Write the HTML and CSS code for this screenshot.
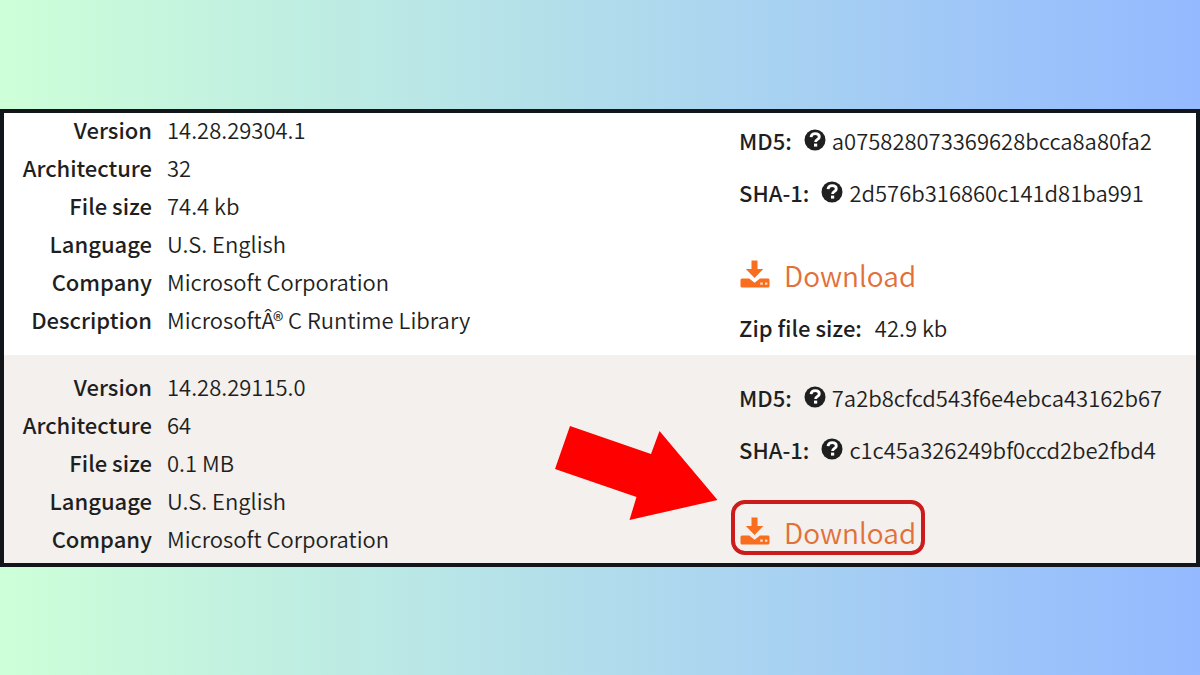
FILE: index.html
```
<!DOCTYPE html>
<html lang="en">
<head>
    <meta charset="UTF-8">
    <meta name="viewport" content="width=device-width, initial-scale=1.0">
    <title>Microsoft C Runtime Library</title>
    <link rel="stylesheet" href="styles.css">
</head>
<body>
    <!-- Shared icons -->
    <svg class="icon-defs" aria-hidden="true">
        <symbol id="icon-help" viewBox="0 0 22 22">
            <circle cx="11" cy="11" r="10.5" fill="#1f1f1f"/>
            <path d="M7 8.200C7.300 5.800 9 4.700 11.200 4.700c2.400 0 4.100 1.200 4.100 3.200 0 2.500-3.700 2.500-3.700 5.100" fill="none" stroke="#fff" stroke-width="2.800"/>
            <rect x="10" y="14.600" width="3.200" height="3" fill="#fff"/>
        </symbol>
        <symbol id="icon-download" viewBox="0 0 30 28">
            <path d="M11.500 0.500h6v8.500h5.800L14.600 18 5.800 9h5.700z" fill="currentColor"/>
            <path d="M2 18.500h7.200l5.400 4.300 5.400-4.300H28a1.500 1.500 0 0 1 1.500 1.500v6a1.500 1.500 0 0 1-1.500 1.500H2A1.500 1.500 0 0 1 .5 26v-6A1.500 1.500 0 0 1 2 18.500z" fill="currentColor"/>
            <path d="M20.200 22.500h2.600v2.200h-2.600zM25 22.500h2.400v2.200H25z" fill="#fff" opacity="0.75"/>
        </symbol>
    </svg>

    <main class="file-list">
        <section class="file-row">
            <dl class="file-info">
                <dt>Version</dt>
                <dd>14.28.29304.1</dd>
                <dt>Architecture</dt>
                <dd>32</dd>
                <dt>File size</dt>
                <dd>74.4 kb</dd>
                <dt>Language</dt>
                <dd>U.S. English</dd>
                <dt>Company</dt>
                <dd>Microsoft Corporation</dd>
                <dt>Description</dt>
                <dd>MicrosoftÂ® C Runtime Library</dd>
            </dl>
            <div class="file-download">
                <div class="hash">
                    <strong>MD5:</strong>
                    <button class="help" type="button" aria-label="About MD5"><svg><use href="#icon-help"/></svg></button>
                    <span>a075828073369628bcca8a80fa2</span>
                </div>
                <div class="hash">
                    <strong>SHA-1:</strong>
                    <button class="help" type="button" aria-label="About SHA-1"><svg><use href="#icon-help"/></svg></button>
                    <span>2d576b316860c141d81ba991</span>
                </div>
                <a href="#" class="download">
                    <svg class="download-icon" aria-hidden="true"><use href="#icon-download"/></svg>
                    Download
                </a>
                <div class="zip-size"><strong>Zip file size:</strong> <span>42.9 kb</span></div>
            </div>
        </section>

        <section class="file-row">
            <dl class="file-info">
                <dt>Version</dt>
                <dd>14.28.29115.0</dd>
                <dt>Architecture</dt>
                <dd>64</dd>
                <dt>File size</dt>
                <dd>0.1 MB</dd>
                <dt>Language</dt>
                <dd>U.S. English</dd>
                <dt>Company</dt>
                <dd>Microsoft Corporation</dd>
            </dl>
            <div class="file-download">
                <div class="hash">
                    <strong>MD5:</strong>
                    <button class="help" type="button" aria-label="About MD5"><svg><use href="#icon-help"/></svg></button>
                    <span>7a2b8cfcd543f6e4ebca43162b67</span>
                </div>
                <div class="hash">
                    <strong>SHA-1:</strong>
                    <button class="help" type="button" aria-label="About SHA-1"><svg><use href="#icon-help"/></svg></button>
                    <span>c1c45a326249bf0ccd2be2fbd4</span>
                </div>
                <a href="#" class="download download-marked">
                    <svg class="download-icon" aria-hidden="true"><use href="#icon-download"/></svg>
                    Download
                    <svg class="arrow" viewBox="0 0 163 95" aria-hidden="true">
                        <path d="M15 0 96 28 104.500 5 162.500 74 74.500 94 81.500 71 0 43z" fill="#fe0000"/>
                    </svg>
                </a>
            </div>
        </section>
    </main>
</body>
</html>
```
FILE: styles.css
```
:root {
    --text-color: #1f1f1f;
    --frame-color: #10161a;
    --row-color: #fff;
    --row-alt-color: #f3f0ed;
    --download-color: #f96d1f;
    --mark-color: #cb1b1b;
}

*,
*::before,
*::after {
    margin: 0;
    padding: 0;
    box-sizing: border-box;
}

body {
    display: flex;
    flex-direction: column;
    justify-content: center;
    min-height: 100vh;
    background: linear-gradient(90deg, #cdffd8, #94b9ff);
    color: var(--text-color);
    font-family: "Noto Sans CJK SC", "Noto Sans", sans-serif;
    font-size: 22px;
    font-weight: 350;
    line-height: 38px;
}

strong,
dt {
    font-weight: 500;
}

.icon-defs {
    position: absolute;
    width: 0;
    height: 0;
}

.file-list {
    border: 4px solid var(--frame-color);
    background-color: var(--row-color);
}

.file-row {
    display: grid;
    grid-template-columns: 8fr 5fr;
    gap: 4px;
    padding-bottom: 9px;
}

.file-row:nth-child(even) {
    padding: 15px 0 6px;
    background-color: var(--row-alt-color);
}

.file-info {
    display: grid;
    grid-template-columns: 148px 1fr;
    column-gap: 15px;
    align-content: start;
    margin-top: -3px;
}

.file-info dt {
    text-align: right;
}

.file-download {
    display: flex;
    flex-direction: column;
    align-items: flex-start;
    gap: 14px;
    padding-top: 8px;
}

.hash {
    display: flex;
    align-items: center;
    white-space: nowrap;
}

.help {
    width: 22px;
    height: 22px;
    margin: 0 6px 0 12px;
    border: none;
    background: none;
    cursor: pointer;
}

.help svg {
    display: block;
    width: 22px;
    height: 22px;
}

.download {
    display: flex;
    align-items: center;
    gap: 14px;
    position: relative;
    margin-top: 31px;
    padding-left: 1px;
    color: #e2703a;
    font-size: 28px;
    text-decoration: none;
}

.download-icon {
    width: 30px;
    height: 28px;
    margin-bottom: 2px;
    color: var(--download-color);
}

/* Outline and arrow that point out the 64-bit build */
.download-marked::after {
    content: "";
    position: absolute;
    inset: -13px -9px -4px -8px;
    border: 4px solid var(--mark-color);
    border-radius: 14px;
}

.arrow {
    position: absolute;
    top: -87px;
    right: calc(100% + 21px);
    width: 163px;
    height: 95px;
}

.zip-size span {
    margin-left: 8px;
}
```
